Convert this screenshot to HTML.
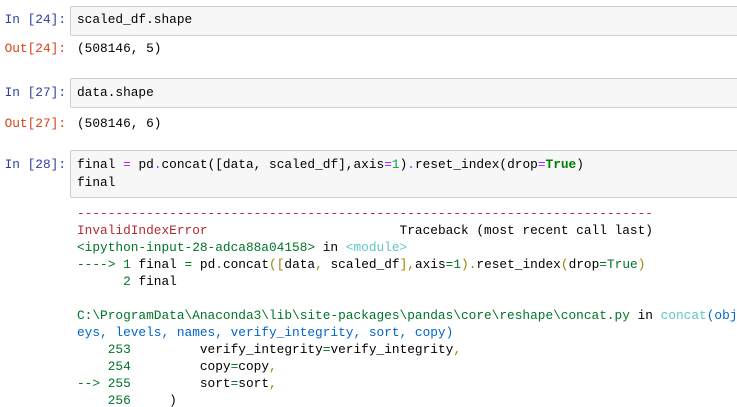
<!DOCTYPE html>
<html><head><style>
html,body{margin:0;width:737px;height:407px;overflow:hidden}
body{background:#fff;font-family:"Liberation Mono",monospace;font-size:12.8px;color:#000;position:relative}
.p{position:absolute;left:0;width:66px;text-align:right;line-height:18px;font-size:12.8px}
.in{color:#303F9F}.out{color:#D84315}
.box{position:absolute;left:70px;width:667px;background:#f7f7f7;border:1px solid #cfcfcf;border-right:none;border-radius:2px 0 0 2px;box-sizing:border-box}
.t{position:absolute;left:77px;white-space:pre;line-height:18px}
.e{position:absolute;left:77px;white-space:pre;line-height:17px}
.r{color:#B22B31}.g{color:#007427}.c{color:#60C6C8}.gl{color:#00A250}.b{color:#0065CA}.o{color:#A38000}.k{color:#008000;font-weight:bold}.m{color:#AA22FF}
</style></head><body>
<div class="p in" style="top:11px">In [24]:</div>
<div class="box" style="top:6px;height:30px"></div>
<div class="t" style="top:11px">scaled_df.shape</div>
<div class="p out" style="top:40px">Out[24]:</div>
<div class="t" style="top:40px">(508146, 5)</div>

<div class="p in" style="top:84px">In [27]:</div>
<div class="box" style="top:78px;height:30px"></div>
<div class="t" style="top:84px">data.shape</div>
<div class="p out" style="top:115px">Out[27]:</div>
<div class="t" style="top:115px">(508146, 6)</div>

<div class="p in" style="top:156px">In [28]:</div>
<div class="box" style="top:150px;height:48px"></div>
<div class="t" style="top:156px">final <span class="m">=</span> pd<span class="m">.</span>concat([data, scaled_df],axis<span class="m">=</span><span class="gl">1</span>)<span class="m">.</span>reset_index(drop<span class="m">=</span><span class="k">True</span>)
final</div>

<div class="e" style="top:205px"><span class="r">---------------------------------------------------------------------------</span>
<span class="r">InvalidIndexError</span>                         Traceback (most recent call last)
<span class="g">&lt;ipython-input-28-adca88a04158&gt;</span> in <span class="c">&lt;module&gt;</span>
<span class="g">----&gt; 1</span> final <span class="g">=</span> pd<span class="g">.</span>concat<span class="o">([</span>data<span class="o">,</span> scaled_df<span class="o">],</span>axis<span class="g">=1</span><span class="o">).</span>reset_index<span class="o">(</span>drop<span class="g">=True</span><span class="o">)</span>
<span class="g">      2</span> final

<span class="g">C:\ProgramData\Anaconda3\lib\site-packages\pandas\core\reshape\concat.py</span> in <span class="c">concat</span><span class="b">(obj</span>
<span class="b">eys, levels, names, verify_integrity, sort, copy)</span>
<span class="g">    253</span>         verify_integrity<span class="g">=</span>verify_integrity<span class="o">,</span>
<span class="g">    254</span>         copy<span class="g">=</span>copy<span class="o">,</span>
<span class="g">--&gt; 255</span>         sort<span class="g">=</span>sort<span class="o">,</span>
<span class="g">    256</span>     )</div>
</body></html>
